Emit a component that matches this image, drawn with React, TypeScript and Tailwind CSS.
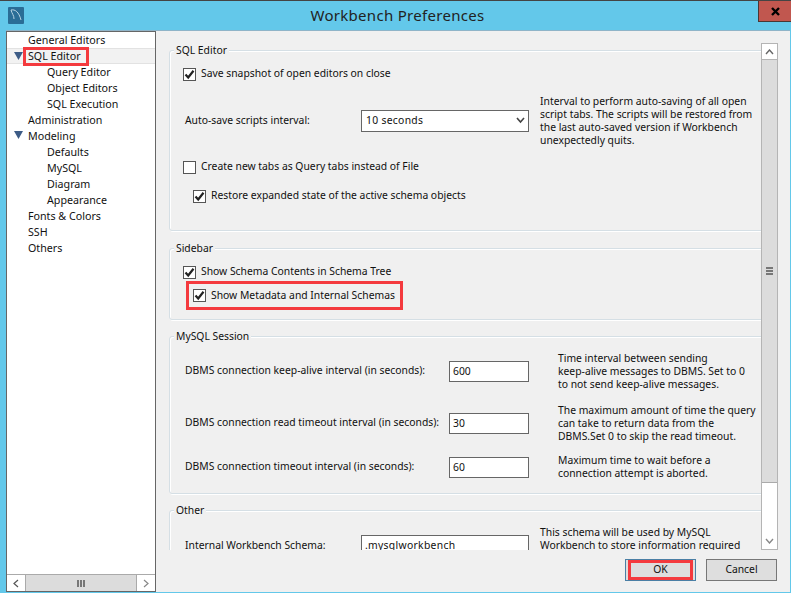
const F = "[font-family:'Noto_Sans',sans-serif]";

function Check({ checked = true }: { checked?: boolean }) {
  return (
    <span className="w-[13px] h-[13px] border border-[#555] bg-white shrink-0 flex items-center justify-center">
      {checked && (
        <svg width="11" height="11" viewBox="0 0 11 11">
          <path d="M1.5 5.5 L4.2 8.5 L9.5 1.8" fill="none" stroke="#222" strokeWidth="2.2" />
        </svg>
      )}
    </span>
  );
}

function CheckRow({ label, checked = true, cls = "" }: { label: string; checked?: boolean; cls?: string }) {
  return (
    <div className={"flex items-center gap-[5px] h-[16px] whitespace-nowrap " + cls}>
      <Check checked={checked} />
      <span>{label}</span>
    </div>
  );
}

function Group({ title, cls, children }: { title: string; cls: string; children?: React.ReactNode }) {
  return (
    <div className={"relative shrink-0 border border-[#d5dfe5] rounded-[3px] shadow-[inset_1px_1px_0_#fff,1px_1px_0_#fff] ml-[13px] -mr-[3px] " + cls}>
      <span className="absolute left-[4px] -top-[9px] bg-[#f0f0f0] px-[2px] leading-[16px]">{title}</span>
      {children}
    </div>
  );
}

function FieldRow({ label, value, help, cls }: { label: string; value: string; help: string[]; cls: string }) {
  return (
    <div className={"flex items-center " + cls}>
      <span className="w-[264px] shrink-0 whitespace-nowrap">{label}</span>
      <span className="w-[80px] h-[21px] border border-[#666] bg-white pl-[3px] leading-[19px] shrink-0">{value}</span>
      <div className="ml-[29px] leading-[13px] whitespace-nowrap">
        {help.map((h) => (
          <div key={h}>{h}</div>
        ))}
      </div>
    </div>
  );
}

const tree: [string, number, boolean?, boolean?][] = [
  ["General Editors", 0],
  ["SQL Editor", 0, true, true],
  ["Query Editor", 1],
  ["Object Editors", 1],
  ["SQL Execution", 1],
  ["Administration", 0],
  ["Modeling", 0, true],
  ["Defaults", 1],
  ["MySQL", 1],
  ["Diagram", 1],
  ["Appearance", 1],
  ["Fonts & Colors", 0],
  ["SSH", 0],
  ["Others", 0],
];

export default function App() {
  return (
    <div className={"w-[791px] h-[593px] bg-[#63c8ea] flex flex-col overflow-hidden text-[10.35px] text-[#111] " + F}>
      <div className="relative h-[30px] shrink-0 border-t border-[#444] flex items-center justify-center">
        <svg className="absolute left-[8px] top-[6px]" width="16" height="17" viewBox="0 0 16 17">
          <rect width="16" height="17" rx="1" fill="#2a6d96" />
          <path d="M3 3 C7 2 11 5 13 13 M3 3 C4 7 6 8 6 12" fill="none" stroke="#b9d5e4" strokeWidth="1" />
        </svg>
        <span className="text-[15px] text-[#222] ml-[4px] tracking-[0.3px]">Workbench Preferences</span>
        <div className="absolute right-0 top-0 w-[33px] h-[21px] bg-[#c1574f] border-l border-b border-[#4a3634] flex items-center justify-center">
          <svg width="9" height="9" viewBox="0 0 9 9">
            <path d="M1 1 L8 8 M8 1 L1 8" stroke="#000" strokeWidth="2.4" />
          </svg>
        </div>
      </div>

      <div className="flex ml-[6px] mr-px h-[562px] bg-[#f0f0f0] border-t border-[#8fb4c8]">
        <div className="w-[150px] h-[561px] shrink-0 border border-[#666] bg-white flex flex-col">
          <div className="flex-1 text-[10.7px]">
            {tree.map(([label, level, arrow, selected]) => (
              <div
                key={label}
                className={
                  "relative h-[16px] leading-[16px] " +
                  (level ? "pl-[40px] " : "pl-[21px] ") +
                  (selected ? "bg-[#f2f2f2] border-y border-[#e2e2e2] leading-[14px]" : "")
                }
              >
                {arrow && (
                  <svg className="absolute left-[7px] top-[3px]" width="9" height="8" viewBox="0 0 9 8">
                    <path d="M0 0 H9 L4.5 8 Z" fill="#3d5c86" />
                  </svg>
                )}
                {selected ? (
                  <span className="absolute left-[16px] -top-[2px] h-[19px] w-[66px] border-[3px] border-[#f43a3e] pl-[2px] leading-[13px] whitespace-nowrap">
                    {label}
                  </span>
                ) : (
                  label
                )}
              </div>
            ))}
          </div>
          <div className="h-[17px] shrink-0 flex items-center border-t border-[#aaa] bg-white">
            <div className="w-[18px] flex justify-center">
              <svg width="6" height="9" viewBox="0 0 6 9"><path d="M5 1 L1 4.5 L5 8" fill="none" stroke="#555" strokeWidth="1.2" /></svg>
            </div>
            <div className="flex-1 h-full bg-[#dcdcdc] border-x border-[#aaa] flex items-center justify-center">
              <svg width="8" height="7" viewBox="0 0 8 7"><path d="M1 0 V7 M4 0 V7 M7 0 V7" stroke="#555" strokeWidth="1.5" /></svg>
            </div>
            <div className="w-[18px] flex justify-center">
              <svg width="6" height="9" viewBox="0 0 6 9"><path d="M1 1 L5 4.5 L1 8" fill="none" stroke="#888" strokeWidth="1.2" /></svg>
            </div>
          </div>
        </div>

        <div className="flex-1 flex flex-col min-w-0">
          <div className="h-[519px] shrink-0 flex">
            <div className="w-[605px] shrink-0 h-full overflow-hidden pt-[19px] flex flex-col">
              <Group title="SQL Editor" cls="h-[181px] pl-[15px] pt-[15px]">
                <CheckRow label="Save snapshot of open editors on close" cls="-ml-[2px]" />
                <div className="flex items-center mt-[15px] h-[47px]">
                  <span className="w-[176px] shrink-0">Auto-save scripts interval:</span>
                  <div className="w-[168px] h-[22px] border border-[#666] bg-white pl-[4px] pr-[3px] flex items-center justify-between shrink-0">
                    <span className="tracking-[0.3px]">10 seconds</span>
                    <svg width="9" height="7" viewBox="0 0 9 7"><path d="M1 1 L4.5 5 L8 1" fill="none" stroke="#444" strokeWidth="1.6" /></svg>
                  </div>
                  <div className="ml-[11px] leading-[13px] whitespace-nowrap">
                    <div>Interval to perform auto-saving of all open</div>
                    <div>script tabs. The scripts will be restored from</div>
                    <div>the last auto-saved version if Workbench</div>
                    <div>unexpectedly quits.</div>
                  </div>
                </div>
                <CheckRow label="Create new tabs as Query tabs instead of File" checked={false} cls="mt-[15px] -ml-[2px]" />
                <CheckRow label="Restore expanded state of the active schema objects" cls="mt-[13px] ml-[8px]" />
              </Group>

              <Group title="Sidebar" cls="h-[72px] mt-[17px] pl-[15px] pt-[15px]">
                <CheckRow label="Show Schema Contents in Schema Tree" cls="-ml-[2px]" />
                <div className="mt-[1px] ml-px w-[217px] h-[29px] border-[3px] border-[#f43a3e] pl-[4px] flex items-center">
                  <CheckRow label="Show Metadata and Internal Schemas" />
                </div>
              </Group>

              <Group title="MySQL Session" cls="h-[158px] mt-[16px] pl-[15px] pt-[12px]">
                <FieldRow
                  label="DBMS connection keep-alive interval (in seconds):"
                  value="600"
                  cls="h-[44px]"
                  help={["Time interval between sending", "keep-alive messages to DBMS. Set to 0", "to not send keep-alive messages."]}
                />
                <FieldRow
                  label="DBMS connection read timeout interval (in seconds):"
                  value="30"
                  cls="h-[44px] mt-[8px]"
                  help={["The maximum amount of time the query", "can take to return data from the", "DBMS.Set 0 to skip the read timeout."]}
                />
                <FieldRow
                  label="DBMS connection timeout interval (in seconds):"
                  value="60"
                  cls="h-[34px] mt-[5px]"
                  help={["Maximum time to wait before a", "connection attempt is aborted."]}
                />
              </Group>

              <Group title="Other" cls="h-[60px] mt-[16px] pl-[15px] pt-[24px]">
                <div className="flex items-start">
                  <span className="w-[176px] shrink-0 mt-[3px]">Internal Workbench Schema:</span>
                  <span className="w-[168px] h-[21px] border border-[#666] bg-white pl-[3px] leading-[19px] shrink-0 tracking-[0.3px]">.mysqlworkbench</span>
                  <div className="ml-[11px] -mt-[9px] leading-[13px] whitespace-nowrap">
                    <div>This schema will be used by MySQL</div>
                    <div>Workbench to store information required</div>
                  </div>
                </div>
              </Group>
            </div>

            <div className="w-[17px] h-[507px] mt-[12px] shrink-0 border border-[#b4b4b4] bg-white flex flex-col">
              <div className="h-[16px] shrink-0 flex items-center justify-center border-b border-[#b4b4b4]">
                <svg width="9" height="6" viewBox="0 0 9 6"><path d="M1 5 L4.5 1 L8 5" fill="none" stroke="#666" strokeWidth="1.4" /></svg>
              </div>
              <div className="h-[423px] bg-[#dcdcdc] border-b border-[#aaa] flex items-center justify-center">
                <svg width="7" height="8" viewBox="0 0 7 8"><path d="M0 1 H7 M0 4 H7 M0 7 H7" stroke="#777" strokeWidth="2" /></svg>
              </div>
              <div className="flex-1" />
              <div className="h-[16px] shrink-0 flex items-center justify-center">
                <svg width="9" height="6" viewBox="0 0 9 6"><path d="M1 1 L4.5 5 L8 1" fill="none" stroke="#888" strokeWidth="1.4" /></svg>
              </div>
            </div>
          </div>

          <div className="flex justify-end gap-[10px] pr-[13px] mt-[9px]">
            <div className="w-[71px] h-[22px] border border-[#4a7fa5] bg-[#dedede] flex items-center justify-center">
              <div className="w-[65px] h-[20px] border-[3px] border-[#f43a3e] flex items-center justify-center">OK</div>
            </div>
            <div className="w-[71px] h-[22px] border border-[#777] bg-[#dedede] flex items-center justify-center">Cancel</div>
          </div>
        </div>
      </div>
    </div>
  );
}
